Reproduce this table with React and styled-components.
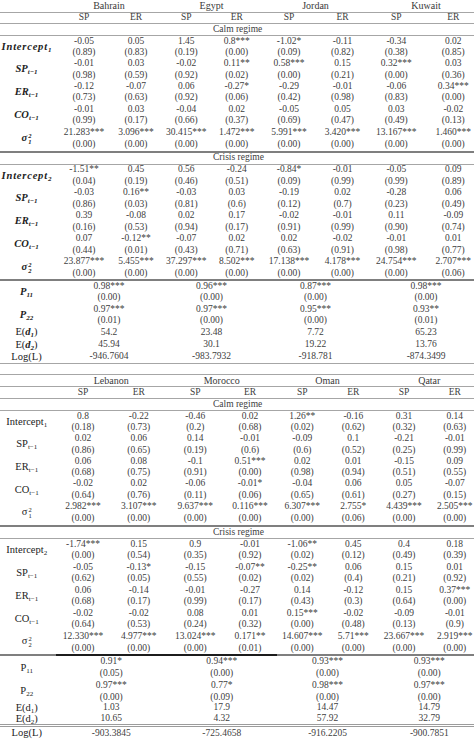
import React from 'react';
import styled, { createGlobalStyle } from 'styled-components';

const Global = createGlobalStyle`
  html, body { margin: 0; padding: 0; background: #fff; overflow: hidden; }
`;

const Page = styled.div`
  width: 474px;
  height: 741px;
  overflow: hidden;
  background: #fff;
`;

const LINES = {
  thin: '1px solid #a6a6a6',
  thick: '2px solid #7f7f7f',
  double: '3px double #9c9c9c',
};

const Table = styled.table`
  table-layout: fixed;
  border-collapse: collapse;
  width: ${(p) => p.$w}px;
  margin-top: ${(p) => p.$mt || 0}px;
  font-family: "Liberation Serif", "Times New Roman", serif;
  font-size: 9.5px;
  font-weight: 400;
  color: #404040;
  ${(p) => (p.$top ? `border-top: ${LINES.thin};` : '')}
`;

const Col = styled.col`
  width: ${(p) => p.$w}px;
`;

const Row = styled.tr`
  height: ${(p) => p.$h}px;
  ${(p) => (p.$line ? `border-bottom: ${LINES[p.$line]};` : '')}
`;

const Cell = styled.td`
  padding: 0;
  text-align: center;
  vertical-align: middle;
  white-space: nowrap;
  line-height: 1;
  ${(p) => (p.$dark ? 'border-bottom: 2px solid #1c1c1c;' : '')}
`;

const Country = styled(Cell)`
  font-size: 10px;
  font-weight: 400;
  color: #3a3a3a;
`;

const Regime = styled(Cell)`
  text-align: left;
  padding-left: 213px;
`;

const Label = styled(Cell)`
  font-size: 10.5px;
  color: #222;
  padding-right: ${(p) => p.$pr || 0}px;
  font-weight: ${(p) => (p.$math ? 700 : 400)};
  font-style: ${(p) => (p.$math ? 'italic' : 'normal')};
  letter-spacing: ${(p) => p.$ls || 0}px;
`;

const Sub = styled.sub`
  font-size: 7px;
  vertical-align: -2px;
  line-height: 0;
  letter-spacing: 0;
`;

const Stack = styled.span`
  display: inline-flex;
  flex-direction: column;
  vertical-align: middle;
  font-size: 6.5px;
  line-height: 6px;
  margin-left: 1px;
`;

const BoldMath = styled.span`
  font-weight: 700;
  font-style: italic;
`;

const T1 = {
  countries: ['Bahrain', 'Egypt', 'Jordan', 'Kuwait'],
  cols: [57, 54, 50, 50.5, 50.5, 54, 53, 54.5, 59.5],
  math: true,
  pr: 4,
  mt: 0,
  top: false,
  h: {
    head: [12, 11.5, 12],
    calmRow: 11.4,
    calmSigma: [12.6, 12.5],
    crisisRegime: 12.5,
    crisisRow: 11.5,
    crisisSigma: [12, 12],
    trans: [12, 12, 11.5, 11],
    ed: [12, 12.5],
    log: 12.5,
  },
  edLine: null,
  logLine: 'thin',
  darkCols: 0,
  calm: [
    [['-0.05', '0.05', '1.45', '0.8***', '-1.02*', '-0.11', '-0.34', '0.02'],
     ['(0.89)', '(0.83)', '(0.19)', '(0.00)', '(0.09)', '(0.82)', '(0.38)', '(0.85)']],
    [['-0.01', '0.03', '-0.02', '0.11**', '0.58***', '0.15', '0.32***', '0.03'],
     ['(0.98)', '(0.59)', '(0.92)', '(0.02)', '(0.00)', '(0.21)', '(0.00)', '(0.36)']],
    [['-0.12', '-0.07', '0.06', '-0.27*', '-0.29', '-0.01', '-0.06', '0.34***'],
     ['(0.73)', '(0.63)', '(0.92)', '(0.06)', '(0.42)', '(0.98)', '(0.83)', '(0.00)']],
    [['-0.01', '0.03', '-0.04', '0.02', '-0.05', '0.05', '0.03', '-0.02'],
     ['(0.99)', '(0.17)', '(0.66)', '(0.37)', '(0.69)', '(0.47)', '(0.49)', '(0.13)']],
    [['21.283***', '3.096***', '30.415***', '1.472***', '5.991***', '3.420***', '13.167***', '1.460***'],
     ['(0.00)', '(0.00)', '(0.00)', '(0.00)', '(0.00)', '(0.00)', '(0.00)', '(0.00)']],
  ],
  crisis: [
    [['-1.51**', '0.45', '0.56', '-0.24', '-0.84*', '-0.01', '-0.05', '0.09'],
     ['(0.04)', '(0.19)', '(0.46)', '(0.51)', '(0.09)', '(0.99)', '(0.99)', '(0.89)']],
    [['-0.03', '0.16**', '-0.03', '0.03', '-0.19', '0.02', '-0.28', '0.06'],
     ['(0.86)', '(0.03)', '(0.81)', '(0.6)', '(0.12)', '(0.7)', '(0.23)', '(0.49)']],
    [['0.39', '-0.08', '0.02', '0.17', '-0.02', '-0.01', '0.11', '-0.09'],
     ['(0.16)', '(0.53)', '(0.94)', '(0.17)', '(0.91)', '(0.99)', '(0.90)', '(0.74)']],
    [['0.07', '-0.12**', '-0.07', '0.02', '0.02', '-0.02', '-0.01', '0.01'],
     ['(0.44)', '(0.01)', '(0.43)', '(0.71)', '(0.63)', '(0.91)', '(0.98)', '(0.77)']],
    [['23.877***', '5.455***', '37.297***', '8.502***', '17.138***', '4.178***', '24.754***', '2.707***'],
     ['(0.00)', '(0.00)', '(0.00)', '(0.00)', '(0.00)', '(0.00)', '(0.00)', '(0.06)']],
  ],
  p11: [['0.98***', '0.96***', '0.87***', '0.98***'], ['(0.00)', '(0.00)', '(0.00)', '(0.00)']],
  p22: [['0.97***', '0.97***', '0.95***', '0.93**'], ['(0.01)', '(0.00)', '(0.00)', '(0.01)']],
  ed1: ['54.2', '23.48', '7.72', '65.23'],
  ed2: ['45.94', '30.1', '19.22', '13.76'],
  log: ['-946.7604', '-983.7932', '-918.781', '-874.3499'],
};

const T2 = {
  countries: ['Lebanon', 'Morocco', 'Oman', 'Qatar'],
  cols: [55.5, 55, 56.5, 56.5, 53, 51.5, 50.5, 51, 50.5],
  math: false,
  pr: 2,
  mt: 10,
  top: true,
  h: {
    head: [12, 12, 12],
    calmRow: 11.3,
    calmSigma: [11.7, 13],
    crisisRegime: 12.7,
    crisisRow: 11.55,
    crisisSigma: [12, 12],
    trans: [13, 12, 12, 11],
    ed: [10.5, 12.5],
    log: 14,
  },
  edLine: 'double',
  logLine: null,
  darkCols: 4,
  calm: [
    [['0.8', '-0.22', '-0.46', '0.02', '1.26**', '-0.16', '0.31', '0.14'],
     ['(0.18)', '(0.73)', '(0.2)', '(0.68)', '(0.02)', '(0.62)', '(0.32)', '(0.63)']],
    [['0.02', '0.06', '0.14', '-0.01', '-0.09', '0.1', '-0.21', '-0.01'],
     ['(0.86)', '(0.65)', '(0.19)', '(0.6)', '(0.6)', '(0.52)', '(0.25)', '(0.99)']],
    [['0.06', '0.08', '-0.1', '0.51***', '0.02', '0.01', '-0.15', '0.09'],
     ['(0.68)', '(0.75)', '(0.91)', '(0.00)', '(0.98)', '(0.94)', '(0.51)', '(0.55)']],
    [['-0.02', '0.02', '-0.06', '-0.01*', '-0.04', '0.06', '0.05', '-0.07'],
     ['(0.64)', '(0.76)', '(0.11)', '(0.06)', '(0.65)', '(0.61)', '(0.27)', '(0.15)']],
    [['2.982***', '3.107***', '9.637***', '0.116***', '6.307***', '2.755*', '4.439***', '2.505***'],
     ['(0.00)', '(0.00)', '(0.00)', '(0.00)', '(0.00)', '(0.06)', '(0.00)', '(0.00)']],
  ],
  crisis: [
    [['-1.74***', '0.15', '0.9', '-0.01', '-1.06**', '0.45', '0.4', '0.18'],
     ['(0.00)', '(0.54)', '(0.35)', '(0.92)', '(0.02)', '(0.12)', '(0.49)', '(0.39)']],
    [['-0.05', '-0.13*', '-0.15', '-0.07**', '-0.25**', '0.06', '0.15', '0.01'],
     ['(0.62)', '(0.05)', '(0.55)', '(0.02)', '(0.02)', '(0.4)', '(0.21)', '(0.92)']],
    [['0.06', '-0.14', '-0.01', '-0.27', '0.14', '-0.12', '0.15', '0.37***'],
     ['(0.68)', '(0.17)', '(0.99)', '(0.17)', '(0.43)', '(0.3)', '(0.64)', '(0.00)']],
    [['-0.02', '-0.02', '0.08', '0.01', '0.15***', '-0.02', '-0.09', '-0.01'],
     ['(0.64)', '(0.53)', '(0.24)', '(0.32)', '(0.00)', '(0.48)', '(0.13)', '(0.9)']],
    [['12.330***', '4.977***', '13.024***', '0.171**', '14.607***', '5.71***', '23.667***', '2.919***'],
     ['(0.00)', '(0.00)', '(0.00)', '(0.01)', '(0.00)', '(0.00)', '(0.00)', '(0.00)']],
  ],
  p11: [['0.91*', '0.94***', '0.93***', '0.93***'], ['(0.05)', '(0.00)', '(0.00)', '(0.00)']],
  p22: [['0.97***', '0.77*', '0.98***', '0.97***'], ['(0.00)', '(0.09)', '(0.00)', '(0.00)']],
  ed1: ['1.03', '17.9', '14.47', '14.79'],
  ed2: ['10.65', '4.32', '57.92', '32.79'],
  log: ['-903.3845', '-725.4658', '-916.2205', '-900.7851'],
};

const varLabels = (n) => [
  <>Intercept<Sub>{n}</Sub></>,
  <>SP<Sub>t−1</Sub></>,
  <>ER<Sub>t−1</Sub></>,
  <>CO<Sub>t−1</Sub></>,
  <>σ<Stack><span>2</span><span>{n}</span></Stack></>,
];

function RegimeRows({ t, data, n, rowH, sigmaH, lastLine, dark }) {
  const labels = varLabels(n);
  return data.map(([vals, ps], i) => {
    const isSigma = i === 4;
    const h1 = isSigma ? sigmaH[0] : rowH;
    const h2 = isSigma ? sigmaH[1] : rowH;
    return (
      <React.Fragment key={i}>
        <Row $h={h1}>
          <Label
            rowSpan={2}
            $math={t.math}
            $pr={t.pr}
            $ls={t.math && i === 0 ? 0.8 : 0}
          >
            {labels[i]}
          </Label>
          {vals.map((v, j) => (
            <Cell key={j}>{v}</Cell>
          ))}
        </Row>
        <Row $h={h2} $line={isSigma ? lastLine : null}>
          {ps.map((v, j) => (
            <Cell key={j} $dark={isSigma && dark && j < t.darkCols}>
              {v}
            </Cell>
          ))}
        </Row>
      </React.Fragment>
    );
  });
}

function PairRows({ t, label, data, heights }) {
  return (
    <>
      <Row $h={heights[0]}>
        <Label rowSpan={2} $math={t.math} $pr={t.pr}>
          {label}
        </Label>
        {data[0].map((v, j) => (
          <Cell key={j} colSpan={2}>{v}</Cell>
        ))}
      </Row>
      <Row $h={heights[1]}>
        {data[1].map((v, j) => (
          <Cell key={j} colSpan={2}>{v}</Cell>
        ))}
      </Row>
    </>
  );
}

function SingleRow({ t, label, vals, h, line }) {
  return (
    <Row $h={h} $line={line}>
      <Label $pr={t.pr}>{label}</Label>
      {vals.map((v, j) => (
        <Cell key={j} colSpan={2}>{v}</Cell>
      ))}
    </Row>
  );
}

function ResultsTable({ t }) {
  const w = t.cols.reduce((a, b) => a + b, 0);
  const ed = (k) =>
    t.math ? (
      <>E(<BoldMath>d<Sub>{k}</Sub></BoldMath>)</>
    ) : (
      <>E(d<Sub>{k}</Sub>)</>
    );
  return (
    <Table $w={w} $mt={t.mt} $top={t.top}>
      <colgroup>
        {t.cols.map((c, i) => (
          <Col key={i} $w={c} />
        ))}
      </colgroup>
      <tbody>
        <Row $h={t.h.head[0]} $line="thin">
          <Cell />
          {t.countries.map((c) => (
            <Country key={c} colSpan={2}>{c}</Country>
          ))}
        </Row>
        <Row $h={t.h.head[1]} $line="thin">
          <Cell />
          {t.countries.map((c) => (
            <React.Fragment key={c}>
              <Cell>SP</Cell>
              <Cell>ER</Cell>
            </React.Fragment>
          ))}
        </Row>
        <Row $h={t.h.head[2]} $line="thin">
          <Regime colSpan={9}>Calm regime</Regime>
        </Row>
        <RegimeRows
          t={t}
          data={t.calm}
          n={1}
          rowH={t.h.calmRow}
          sigmaH={t.h.calmSigma}
          lastLine="thick"
        />
        <Row $h={t.h.crisisRegime} $line="thin">
          <Regime colSpan={9}>Crisis regime</Regime>
        </Row>
        <RegimeRows
          t={t}
          data={t.crisis}
          n={2}
          rowH={t.h.crisisRow}
          sigmaH={t.h.crisisSigma}
          lastLine="thick"
          dark
        />
        <PairRows
          t={t}
          label={<>P<Sub>11</Sub></>}
          data={t.p11}
          heights={[t.h.trans[0], t.h.trans[1]]}
        />
        <PairRows
          t={t}
          label={<>P<Sub>22</Sub></>}
          data={t.p22}
          heights={[t.h.trans[2], t.h.trans[3]]}
        />
        <SingleRow t={t} label={ed(1)} vals={t.ed1} h={t.h.ed[0]} />
        <SingleRow t={t} label={ed(2)} vals={t.ed2} h={t.h.ed[1]} line={t.edLine} />
        <SingleRow t={t} label="Log(L)" vals={t.log} h={t.h.log} line={t.logLine} />
      </tbody>
    </Table>
  );
}

export default function App() {
  return (
    <Page>
      <Global />
      <ResultsTable t={T1} />
      <ResultsTable t={T2} />
    </Page>
  );
}
